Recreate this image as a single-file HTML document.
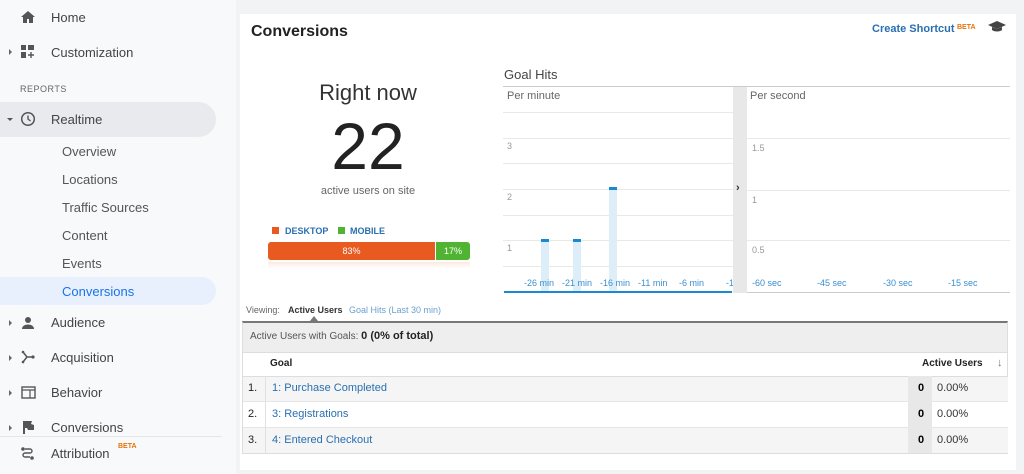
<!DOCTYPE html>
<html><head><meta charset="utf-8"><style>
*{margin:0;padding:0;box-sizing:border-box}
body{width:1024px;height:474px;overflow:hidden;background:#f1f3f4;font-family:"Liberation Sans",Arial,sans-serif;position:relative}
.a{position:absolute;white-space:nowrap}
.side{position:absolute;left:0;top:0;width:236px;height:474px;background:#f8f9fa}
.nav{font-size:13px;color:#444}
.sub{font-size:13px;color:#555}
.car{position:absolute;width:0;height:0;border-top:3px solid transparent;border-bottom:3px solid transparent;border-left:3px solid #666}
.card{position:absolute;left:240px;top:14px;width:776px;height:456px;background:#fff}
.g{position:absolute;height:1px;background:#e8e8e8}
.yl{font-size:9px;color:#999}
.xl{font-size:9px;color:#3a8fd0}
.bar{position:absolute;width:8px;background:#deeef9}
.cap{position:absolute;width:8px;height:3px;background:#1a8ad0}
.row{position:absolute;left:243px;width:765px;font-size:11px}
.lnk{color:#2a6fb0}
</style></head><body>
<div class="side">
 <svg class="a" style="left:20px;top:10px" width="16" height="14" viewBox="0 0 16 14"><path d="M8 1L1 7h2v6h4V9h2v4h4V7h2z" fill="#555"/></svg>
 <div class="a nav" style="left:51px;top:10px">Home</div>
 <div class="car" style="left:9px;top:49px"></div>
 <svg class="a" style="left:21px;top:45px" width="14" height="14" viewBox="0 0 14 14"><rect x="0" y="0" width="5" height="5" fill="#555"/><rect x="7" y="0" width="6" height="5" fill="#555"/><rect x="0" y="7" width="5" height="6" fill="#555"/><path d="M10 7v6M7 10h6" stroke="#555" stroke-width="1.4"/></svg>
 <div class="a nav" style="left:51px;top:45px">Customization</div>
 <div class="a" style="left:20px;top:84px;font-size:9px;color:#666;letter-spacing:.5px">REPORTS</div>
 <div class="a" style="left:0;top:102px;width:216px;height:35px;background:#e8eaed;border-radius:0 18px 18px 0"></div>
 <div class="a" style="left:7px;top:118px;border-left:3px solid transparent;border-right:3px solid transparent;border-top:3px solid #555"></div>
 <svg class="a" style="left:20px;top:111px" width="16" height="16" viewBox="0 0 16 16"><circle cx="8" cy="8" r="6.3" fill="none" stroke="#555" stroke-width="1.5"/><path d="M8 4.5V8l2.5 2" fill="none" stroke="#555" stroke-width="1.4"/></svg>
 <div class="a nav" style="left:51px;top:112px">Realtime</div>
 <div class="a sub" style="left:62px;top:144px">Overview</div>
 <div class="a sub" style="left:62px;top:172px">Locations</div>
 <div class="a sub" style="left:62px;top:200px">Traffic Sources</div>
 <div class="a sub" style="left:62px;top:228px">Content</div>
 <div class="a sub" style="left:62px;top:256px">Events</div>
 <div class="a" style="left:0;top:277px;width:216px;height:28px;background:#e8f0fe;border-radius:0 14px 14px 0"></div>
 <div class="a sub" style="left:62px;top:284px;color:#1a73e8">Conversions</div>
 <div class="car" style="left:9px;top:320px"></div>
 <svg class="a" style="left:21px;top:316px" width="14" height="14" viewBox="0 0 14 14"><circle cx="7" cy="4" r="3" fill="#555"/><path d="M1 13c0-3 3-4.5 6-4.5s6 1.5 6 4.5z" fill="#555"/></svg>
 <div class="a nav" style="left:51px;top:315px">Audience</div>
 <div class="car" style="left:9px;top:355px"></div>
 <svg class="a" style="left:21px;top:350px" width="14" height="14" viewBox="0 0 14 14"><path d="M2 2l4 5-4 5M6 7h6" fill="none" stroke="#555" stroke-width="1.5"/><circle cx="12" cy="7" r="1.6" fill="#555"/><circle cx="2" cy="2" r="1.3" fill="#555"/><circle cx="2" cy="12" r="1.3" fill="#555"/></svg>
 <div class="a nav" style="left:51px;top:350px">Acquisition</div>
 <div class="car" style="left:9px;top:390px"></div>
 <svg class="a" style="left:21px;top:386px" width="15" height="13" viewBox="0 0 15 13"><rect x="1" y="1" width="13" height="11" fill="none" stroke="#555" stroke-width="1.4"/><path d="M1 4h13M9 4v8" stroke="#555" stroke-width="1.2"/></svg>
 <div class="a nav" style="left:51px;top:385px">Behavior</div>
 <div class="car" style="left:9px;top:425px"></div>
 <svg class="a" style="left:22px;top:420px" width="13" height="14" viewBox="0 0 13 14"><path d="M1 1h9l-1 3 3 1v5H6L5 8H3v6H1z" fill="#555"/></svg>
 <div class="a nav" style="left:51px;top:420px">Conversions</div>
 <div class="a" style="left:0;top:436px;width:222px;height:38px;background:#f8f9fa;border-top:1px solid #e6e6e6"></div>
 <svg class="a" style="left:20px;top:446px" width="15" height="15" viewBox="0 0 15 15"><circle cx="3" cy="3" r="1.8" fill="#555"/><circle cx="12" cy="12" r="1.8" fill="#555"/><path d="M5 3h5a2 2 0 010 4H5a2 2 0 000 4h5" fill="none" stroke="#555" stroke-width="1.4"/></svg>
 <div class="a nav" style="left:51px;top:446px">Attribution</div>
 <div class="a" style="left:118px;top:443px;font-size:7px;color:#e8710a;font-weight:bold">BETA</div>
</div>

<div class="card"></div>
<div class="a" style="left:251px;top:23px;font-size:16px;font-weight:bold;color:#222">Conversions</div>
<div class="a" style="left:872px;top:23px;font-size:11px;font-weight:bold;color:#2a6fb0">Create Shortcut</div>
<div class="a" style="left:957px;top:24px;font-size:7px;font-weight:bold;color:#e8710a">BETA</div>
<svg class="a" style="left:988px;top:21px" width="18" height="12" viewBox="0 0 18 12"><path d="M9 0L0 4l9 4 9-4z" fill="#444"/><path d="M4 6v3c2 2 8 2 10 0V6L9 8z" fill="#444"/></svg>

<div class="a" style="left:268px;top:80px;width:200px;text-align:center;font-size:22px;color:#333">Right now</div>
<div class="a" style="left:268px;top:108px;width:200px;text-align:center;font-size:66px;color:#222;line-height:76px">22</div>
<div class="a" style="left:268px;top:185px;width:200px;text-align:center;font-size:11px;color:#666">active users on site</div>
<div class="a" style="left:272px;top:227px;width:7px;height:7px;background:#e85a1f"></div>
<div class="a" style="left:285px;top:226px;font-size:9px;font-weight:bold;color:#2a6fb0">DESKTOP</div>
<div class="a" style="left:338px;top:227px;width:7px;height:7px;background:#50b432"></div>
<div class="a" style="left:350px;top:226px;font-size:9px;font-weight:bold;color:#2a6fb0">MOBILE</div>
<div class="a" style="left:268px;top:242px;width:167px;height:18px;background:#e85a1f;border-radius:3px 0 0 3px;color:#fff;font-size:9px;text-align:center;line-height:18px">83%</div>
<div class="a" style="left:436px;top:242px;width:34px;height:18px;background:#50b432;border-radius:0 3px 3px 0;color:#fff;font-size:9px;text-align:center;line-height:18px">17%</div>
<div class="a" style="left:268px;top:262px;width:202px;height:6px;background:linear-gradient(#fde8dc,#fff)"></div>

<div class="a" style="left:504px;top:67px;font-size:13px;color:#444">Goal Hits</div>
<div class="a" style="left:503px;top:86px;width:507px;height:1px;background:#ccc"></div>
<div class="a" style="left:507px;top:90px;font-size:11px;color:#666">Per minute</div>
<div class="a" style="left:750px;top:90px;font-size:11px;color:#666">Per second</div>
<div class="g" style="left:503px;top:112px;width:230px"></div>
<div class="g" style="left:503px;top:138px;width:230px"></div>
<div class="g" style="left:503px;top:163px;width:230px"></div>
<div class="g" style="left:503px;top:189px;width:230px"></div>
<div class="g" style="left:503px;top:215px;width:230px"></div>
<div class="g" style="left:503px;top:240px;width:230px"></div>
<div class="g" style="left:503px;top:266px;width:230px"></div>
<div class="g" style="left:747px;top:138px;width:263px"></div>
<div class="g" style="left:747px;top:190px;width:263px"></div>
<div class="g" style="left:747px;top:240px;width:263px"></div>
<div class="a yl" style="left:507px;top:141px">3</div>
<div class="a yl" style="left:507px;top:192px">2</div>
<div class="a yl" style="left:507px;top:243px">1</div>
<div class="a yl" style="left:752px;top:143px">1.5</div>
<div class="a yl" style="left:752px;top:195px">1</div>
<div class="a yl" style="left:752px;top:245px">0.5</div>
<div class="bar" style="left:541px;top:240px;height:52px"></div><div class="cap" style="left:541px;top:239px"></div>
<div class="bar" style="left:573px;top:240px;height:52px"></div><div class="cap" style="left:573px;top:239px"></div>
<div class="bar" style="left:609px;top:188px;height:104px"></div><div class="cap" style="left:609px;top:187px"></div>
<div class="a" style="left:504px;top:291px;width:228px;height:2px;background:#1a8ad0"></div>
<div class="a xl" style="left:524px;top:278px">-26 min</div>
<div class="a xl" style="left:562px;top:278px">-21 min</div>
<div class="a xl" style="left:600px;top:278px">-16 min</div>
<div class="a xl" style="left:638px;top:278px">-11 min</div>
<div class="a xl" style="left:679px;top:278px">-6 min</div>
<div class="a xl" style="left:726px;top:278px">-1</div>
<div class="a" style="left:733px;top:87px;width:14px;height:206px;background:#e8e8e8"></div>
<div class="a" style="left:736px;top:182px;font-size:11px;font-weight:bold;color:#333">›</div>
<div class="a xl" style="left:752px;top:278px">-60 sec</div>
<div class="a xl" style="left:817px;top:278px">-45 sec</div>
<div class="a xl" style="left:883px;top:278px">-30 sec</div>
<div class="a xl" style="left:948px;top:278px">-15 sec</div>
<div class="a" style="left:747px;top:292px;width:263px;height:1px;background:#ccc"></div>

<div class="a" style="left:246px;top:305px;font-size:9px;color:#666">Viewing:</div>
<div class="a" style="left:288px;top:305px;font-size:9px;font-weight:bold;color:#333">Active Users</div>
<div class="a" style="left:349px;top:305px;font-size:9px;color:#6a9fd0">Goal Hits (Last 30 min)</div>
<div class="a" style="left:310px;top:316px;border-left:4px solid transparent;border-right:4px solid transparent;border-bottom:5px solid #777"></div>
<div class="a" style="left:242px;top:321px;width:766px;height:31px;background:#eee;border-top:2px solid #777;border-left:1px solid #ddd;border-right:1px solid #ddd"></div>
<div class="a" style="left:250px;top:330px;font-size:10px;color:#555">Active Users with Goals: <b style="color:#222;font-size:11px">0 (0% of total)</b></div>
<div class="a" style="left:242px;top:352px;width:766px;height:102px;border:1px solid #ddd"></div>
<div class="a" style="left:270px;top:358px;font-size:10px;font-weight:bold;color:#222">Goal</div>
<div class="a" style="left:922px;top:358px;font-size:10px;font-weight:bold;color:#222">Active Users</div>
<div class="a" style="left:997px;top:357px;font-size:11px;color:#777">↓</div>
<div class="row" style="top:376px;height:25px;background:#f5f5f5;border-top:1px solid #ddd"></div>
<div class="row" style="top:401px;height:26px;background:#fff;border-top:1px solid #e6e6e6"></div>
<div class="row" style="top:427px;height:26px;background:#f5f5f5;border-top:1px solid #e6e6e6"></div>
<div class="a" style="left:265px;top:376px;width:1px;height:77px;background:#e0e0e0"></div>
<div class="a" style="left:908px;top:376px;width:24px;height:77px;background:#e8e8e8"></div>
<div class="a" style="left:248px;top:382px;font-size:11px;color:#222">1.</div>
<div class="a lnk" style="left:272px;top:382px;font-size:11px">1: Purchase Completed</div>
<div class="a" style="left:248px;top:408px;font-size:11px;color:#222">2.</div>
<div class="a lnk" style="left:272px;top:408px;font-size:11px">3: Registrations</div>
<div class="a" style="left:248px;top:434px;font-size:11px;color:#222">3.</div>
<div class="a lnk" style="left:272px;top:434px;font-size:11px">4: Entered Checkout</div>
<div class="a" style="left:918px;top:382px;font-size:11px;font-weight:bold">0</div>
<div class="a" style="left:937px;top:382px;font-size:11px;color:#333">0.00%</div>
<div class="a" style="left:918px;top:408px;font-size:11px;font-weight:bold">0</div>
<div class="a" style="left:937px;top:408px;font-size:11px;color:#333">0.00%</div>
<div class="a" style="left:918px;top:434px;font-size:11px;font-weight:bold">0</div>
<div class="a" style="left:937px;top:434px;font-size:11px;color:#333">0.00%</div>
</body></html>
